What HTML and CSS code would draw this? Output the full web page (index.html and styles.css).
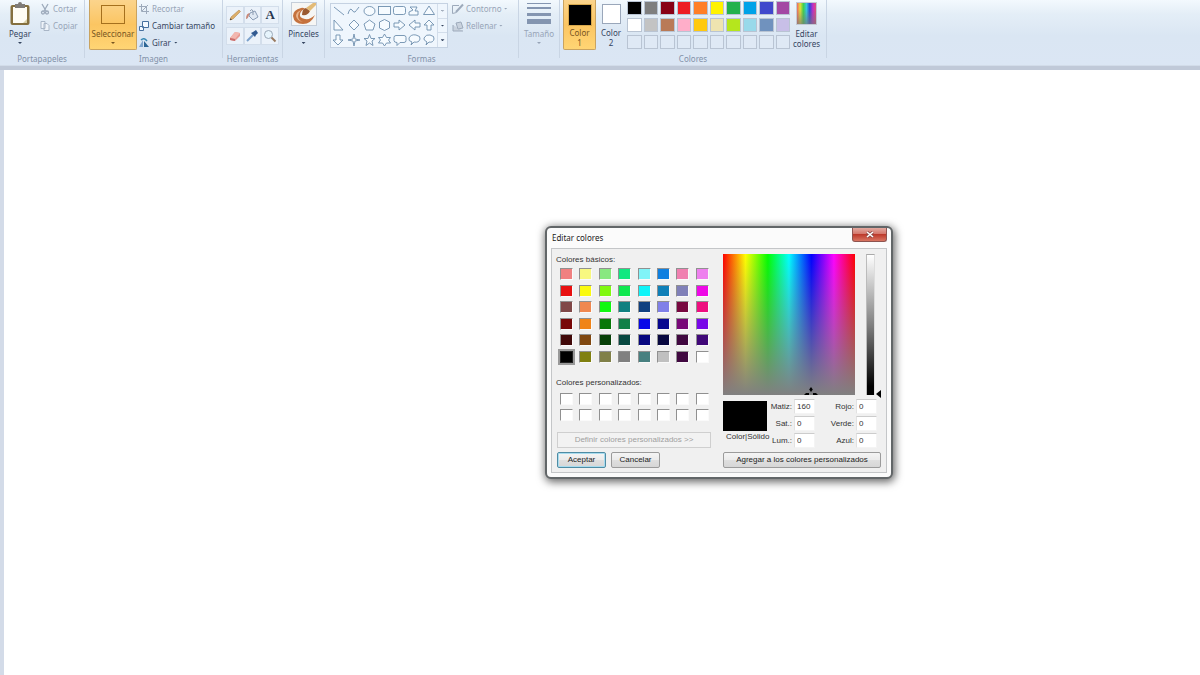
FILE: index.html
```html
<!DOCTYPE html>
<html lang="es">
<head>
<meta charset="utf-8">
<title>Editar colores</title>
<link rel="stylesheet" href="styles.css">
</head>
<body>
<header class="ribbon">
  <section class="group clipboard">
    <div class="group-body">
      <button class="big paste">
        <svg class="big-icon" width="22" height="24" viewBox="0 0 22 24"><rect x="1.500" y="3" width="19" height="20" rx="2" fill="#85703f"/><rect x="4" y="5" width="14" height="16" fill="#fffdf5"/><path d="M14 21h4v-4z" fill="#d8cfa8"/><path d="M6 2h3q0-2 2-2t2 2h3v4H6z" fill="#7f7c78"/></svg>
        <span>Pegar</span><i class="caret"></i>
      </button>
      <div class="list">
        <button class="row off"><svg width="10" height="12" viewBox="0 0 10 12" fill="none" stroke="#9daabb" stroke-width="1.300"><path d="M2 1l4 7M8 1L4 8"/><circle cx="3" cy="9.500" r="1.500"/><circle cx="7" cy="9.500" r="1.500"/></svg><span>Cortar</span></button>
        <button class="row off"><svg width="10" height="12" viewBox="0 0 10 12" fill="#eef3f9" stroke="#a9b6c7"><path d="M1 1.500h4v7H1zM4 3.500h3l2 2v5H4z"/></svg><span>Copiar</span></button>
      </div>
    </div>
    <h2 class="group-name">Portapapeles</h2>
  </section>

  <section class="group image">
    <div class="group-body">
      <button class="big select active">
        <svg class="big-icon" width="24" height="24" viewBox="0 0 24 24"><rect x="0.500" y="4.500" width="23" height="18" fill="none" stroke="#a5701d"/></svg>
        <span>Seleccionar</span><i class="caret"></i>
      </button>
      <div class="list">
        <button class="row off"><svg width="10" height="12" viewBox="0 0 10 12" fill="none" stroke="#9daabb"><path d="M2.500 1v7.500H10M0 3.500h7.500V11M3 8l6-6"/></svg><span>Recortar</span></button>
        <button class="row"><svg width="10" height="12" viewBox="0 0 10 12" fill="#f4f9ff" stroke="#47709f"><path d="M3.500 1.500h6v6h-6zM0.500 6.500h4v4h-4z"/></svg><span>Cambiar tamaño</span></button>
        <button class="row"><svg width="10" height="12" viewBox="0 0 10 12"><path d="M0 10h4V3z" fill="#7fa6cf"/><path d="M5 4v6h5z" fill="#2c6595"/><path d="M2 3q3-3 6 1" fill="none" stroke="#3587b3" stroke-width="1.500"/></svg><span>Girar</span><i class="caret"></i></button>
      </div>
    </div>
    <h2 class="group-name">Imagen</h2>
  </section>

  <section class="group tools">
    <div class="group-body">
      <div class="tool-grid">
        <button aria-label="Lápiz"><svg width="14" height="14" viewBox="0 0 14 14"><path d="M2 12l1-3 8-7 1.500 1.500L5 11z" fill="#dcae69" stroke="#b38a54" stroke-width=".6"/><path d="M2 12l.5-1.800L4 11.500z" fill="#333"/></svg></button>
        <button aria-label="Relleno"><svg width="14" height="14" viewBox="0 0 14 14"><path d="M5 5l5-2 3 6-5 3-4-4z" fill="#dfe8f3" stroke="#8a9db6"/><path d="M8 7V3q-1-3-3 0" fill="none" stroke="#8b9aaf"/><path d="M5 5Q1 5 1 11q2 0 3-4z" fill="#c98878"/></svg></button>
        <button class="letter" aria-label="Texto">A</button>
        <button aria-label="Borrador"><svg width="14" height="14" viewBox="0 0 14 14"><path d="M2 9l5-6 5 1v3l-5 5-5-1z" fill="#e89a93"/><path d="M2 9l5 1 5-6-5-1z" fill="#f2b7b0"/><path d="M2 9l5 1v2l-5-1z" fill="#c86d6d"/></svg></button>
        <button aria-label="Selector de color"><svg width="14" height="14" viewBox="0 0 14 14"><path d="M2 12l6-6" stroke="#7ba1cc" stroke-width="2"/><path d="M6 4l4 4 1-2 2-2-2-3-3 2z" fill="#315a91"/></svg></button>
        <button aria-label="Lupa"><svg width="14" height="14" viewBox="0 0 14 14"><circle cx="5.500" cy="5.500" r="4" fill="#e6f4fc" stroke="#9ba9b8"/><path d="M8.500 8.500l4 4" stroke="#997a5f" stroke-width="2"/></svg></button>
      </div>
    </div>
    <h2 class="group-name">Herramientas</h2>
  </section>

  <section class="group brushes">
    <div class="group-body">
      <button class="big">
        <svg class="big-icon" width="26" height="24" viewBox="0 0 26 24"><rect x=".5" y=".5" width="25" height="23" fill="#f6f6f4" stroke="#c5ced9"/><path d="M10 6Q2 8 2 14q1 8 10 8 8 0 12-9-5 5-10 4-6-1-5-5 1-4 5-5-2-2-4-1z" fill="#c5723d"/><path d="M10 8q-5 2-5 6 1 5 7 6-5-2-5-6 0-3 3-6z" fill="#e9b48c"/><path d="M11 13q0-6 4-7l4 3q-2 5-8 4z" fill="#9a5a31"/><path d="M15 6l7-5h3v2l-6 6z" fill="#e3bb77"/></svg>
        <span>Pinceles</span><i class="caret"></i>
      </button>
    </div>
  </section>

  <section class="group shapes">
    <div class="group-body">
      <div class="shape-box">
        <svg class="shape-grid" viewBox="0 0 106 44" width="106" height="44" fill="#f6fbff" stroke="#6e8fae" stroke-width=".9">
          <path d="M3 3l10 8"/><path d="M17 10q2-7 4-4t3 2 4-5" fill="none"/><ellipse cx="38.500" cy="7" rx="5.500" ry="4.500"/><rect x="47.500" y="2.500" width="12" height="8"/><rect x="62.500" y="2.500" width="12" height="8" rx="2"/><path d="M78 11V8l4-2-3-3h7l-2 4h3v4z"/><path d="M98 2l5.500 8.500h-11z"/>
          <path d="M3 16v10h9z"/><path d="M23 16l5 5-5 5-5-5z"/><path d="M38.500 16l5.500 4-2 6h-7l-2-6z"/><path d="M53.500 15.500l5 2.500v6l-5 2.500-5-2.500v-6z"/><path d="M63 19h5v-3l6 5-6 5v-3h-5z"/><path d="M89 19h-5v-3l-6 5 6 5v-3h5z"/><path d="M96 26v-5h-3l5-5 5 5h-3v5z"/>
          <path d="M5 31v5H2l5 5 5-5H9v-5z"/><path d="M23 30l1 5 5 1-5 1-1 5-1-5-5-1 5-1z"/><path d="M38.500 30.500l1.500 4h4l-3 2.500 1 4.500-3.500-2.500-3.500 2.500 1-4.500-3-2.500h4z"/><path d="M53.500 30l2 3.500h4L57.500 36l2 3h-4l-2 3-2-3h-4l2-3-2-2.500h4z"/><path d="M65 31.500h8q2 0 2 2v3q0 2-2 2h-4l-3 3v-3q-3 0-3-2v-3q0-2 2-2z"/><path d="M80 41l1-3q-4-1-3-4 2-4 7-3 5 1 4 4-1 4-6 3z"/><path d="M95 41l1-3q-4-2-3-4 2-4 6-3 5 1 4 4-1 4-5 3z"/>
        </svg>
        <div class="scroller">
          <button class="faded" aria-label="Subir"><i class="caret"></i></button>
          <button aria-label="Bajar"><i class="caret"></i></button>
          <button aria-label="Más formas"><i class="caret"></i></button>
        </div>
      </div>
      <div class="list">
        <button class="row off"><svg width="12" height="12" viewBox="0 0 12 12" fill="none" stroke="#9daabb"><path d="M7 2.500H.5v8l4-1"/><path d="M4 9l7-7.500" stroke-width="2"/></svg><span>Contorno</span><i class="caret"></i></button>
        <button class="row off"><svg width="12" height="12" viewBox="0 0 12 12" fill="#c9d2de" stroke="#9daabb"><path d="M4 3l5-1 2 6-5 1zM1 5v6h10"/></svg><span>Rellenar</span><i class="caret"></i></button>
      </div>
    </div>
    <h2 class="group-name">Formas</h2>
  </section>

  <section class="group size">
    <div class="group-body">
      <button class="big off">
        <svg class="big-icon" width="24" height="24" viewBox="0 0 24 24" fill="#8495b0"><rect y="1" width="24" height="1"/><rect y="5" width="24" height="2"/><rect y="11" width="24" height="3"/><rect y="17" width="24" height="5"/></svg>
        <span>Tamaño</span><i class="caret"></i>
      </button>
    </div>
  </section>

  <section class="group colors">
    <div class="group-body">
      <button class="big color-slot active"><b class="chip first"></b><span>Color<br>1</span></button>
      <button class="big color-slot second"><b class="chip"></b><span>Color<br>2</span></button>
      <div class="palette" id="palette"></div>
      <button class="big edit"><b class="rainbow"></b><span>Editar<br>colores</span></button>
    </div>
    <h2 class="group-name">Colores</h2>
  </section>
</header>

<main class="canvas"></main>

<div class="dialog" role="dialog" aria-labelledby="dialog-title">
  <div class="title-bar">
    <h1 id="dialog-title">Editar colores</h1>
    <button class="close" aria-label="Cerrar"><svg width="8" height="7" viewBox="0 0 8 7"><path d="M1 1l6 5M7 1L1 6" stroke="#8c4a45" stroke-width="3"/><path d="M1 1l6 5M7 1L1 6" stroke="#fff" stroke-width="1.600"/></svg></button>
  </div>
  <div class="panel">
    <div class="left">
      <p class="caption">Colores básicos:</p>
      <div class="wells basic" id="basic"></div>
      <p class="caption lower">Colores personalizados:</p>
      <div class="wells" id="custom"></div>
      <button class="btn define" disabled>Definir colores personalizados &gt;&gt;</button>
      <div class="actions">
        <button class="btn default">Aceptar</button>
        <button class="btn">Cancelar</button>
      </div>
    </div>
    <div class="right">
      <div class="pickers">
        <div class="spectrum"><svg class="cross" width="14" height="9" viewBox="0 0 14 9"><path d="M7 0l1.800 2.500L7 5 5.200 2.500zM0 8l2-2h3v2zM9 6h3l2 2H9z"/></svg></div>
        <div class="luminance"></div>
        <svg class="pointer" width="5" height="8" viewBox="0 0 5 8"><path d="M5 0v8L0 4z"/></svg>
      </div>
      <div class="values">
        <div class="solid"><div class="preview"></div><span>Color|Sólido</span></div>
        <div class="fields">
          <label for="hue">Matiz:</label><input id="hue" value="160">
          <label for="red">Rojo:</label><input id="red" value="0">
          <label for="sat">Sat.:</label><input id="sat" value="0">
          <label for="green">Verde:</label><input id="green" value="0">
          <label for="lum">Lum.:</label><input id="lum" value="0">
          <label for="blue">Azul:</label><input id="blue" value="0">
        </div>
      </div>
      <button class="btn add">Agregar a los colores personalizados</button>
    </div>
  </div>
</div>
<script src="script.js"></script>
</body>
</html>
```
FILE: styles.css
```css
* { box-sizing: border-box; }
body {
  margin: 0;
  min-height: 100vh;
  display: flex;
  flex-direction: column;
  background: #fff;
  font-family: "Noto Sans", "Open Sans", sans-serif;
  font-size: 8px;
  line-height: 10px;
  color: #34445f;
}
button, input { font: inherit; color: inherit; }
button { border: 0; padding: 0; background: none; }
h1, h2, p { margin: 0; font-size: 8px; font-weight: normal; }
svg { display: block; flex: none; }

/* Ribbon */
.ribbon {
  display: flex;
  height: 70px;
  background: linear-gradient(#f3f9fe 0, #e4eef7 14px, #dae6f3 36px, #dbe6f4 65px);
  border-bottom: 4px solid #c0c9d8;
  box-shadow: inset 0 -1px #d2dce9;
}
.group {
  display: flex;
  flex-direction: column;
  padding: 0 4px;
  border-right: 1px solid #c3cfdf;
  border-image: linear-gradient(#c9d5e4 0 57px, transparent 57px) 1;
  border-width: 0 1px 0 0;
}
.group-body { display: flex; height: 53px; }
.group-name { text-align: center; line-height: 12px; color: #8291a8; }
.clipboard { width: 85px; padding: 0; }
.image { width: 138px; }
.tools { width: 60px; padding: 0 3px; }
.brushes { width: 42px; }
.shapes { width: 194px; padding: 0 5px; }
.size { width: 41px; }
.colors { width: 267px; padding: 0 3px; }

.big {
  display: flex;
  flex-direction: column;
  align-items: center;
  height: 50px;
  padding-top: 2px;
}
.big > span { margin-top: 3px; white-space: nowrap; line-height: 9px; }
.big > .caret { margin: 4px 0 0; }
.paste { width: 40px; }
.select { width: 48px; }
.select .big-icon { margin-top: -1px; margin-bottom: 1px; }
.brushes .big, .size .big { flex: 1; }
.active {
  border: 1px solid #c9a360;
  border-top: 0;
  border-radius: 0 0 2px 2px;
  background: linear-gradient(#fbd48c, #fbc562 50%, #ffd574);
  color: #76551f;
}
.off { color: #97a4b7; }
.caret {
  flex: none;
  width: 4px;
  height: 2px;
  background: currentColor;
  clip-path: polygon(0 0, 100% 0, 50% 100%);
}
.list { display: flex; flex-direction: column; }
.row { display: flex; align-items: center; gap: 3px; height: 17px; white-space: nowrap; }
.image .list { padding-left: 2px; }
.shapes .list { padding-left: 4px; }
.shapes .row { gap: 2px; }

.tool-grid {
  flex: 1;
  display: grid;
  grid-template: 18px 18px / 1fr 1fr 1fr;
  row-gap: 3px;
  align-content: start;
  padding-top: 6px;
}
.tool-grid button {
  display: flex;
  align-items: center;
  justify-content: center;
  border: 1px solid #d3deeb;
  background: #ebf2fa;
}
.tool-grid .letter { font: bold 13px "Liberation Serif", serif; color: #26364f; }

.shape-box {
  display: flex;
  height: 45px;
  margin-top: 3px;
  border: 1px solid #c5d2e2;
  background: #eff6fd;
}
.scroller { display: flex; flex-direction: column; width: 10px; border-left: 1px solid #d3deeb; }
.scroller button { flex: 1; display: flex; align-items: center; justify-content: center; }
.scroller button + button { border-top: 1px solid #d3deeb; }
.faded { opacity: .4; }

.color-slot { width: 33px; padding-top: 4px; }
.color-slot.second { width: 30px; }
.color-slot > span { margin-top: 4px; line-height: 10px; }
.chip { width: 19px; height: 20px; border: 1px solid #9aa7ba; box-shadow: inset 0 0 0 1px #fff; background: #fff; }
.chip.first { width: 24px; height: 22px; margin-bottom: -2px; border-color: #d7a84d; background: #000; box-shadow: none; }
.palette {
  display: grid;
  grid-template-columns: repeat(10, 1fr);
  grid-auto-rows: 14px;
  align-content: start;
  gap: 3px 2px;
  width: 164px;
  padding: 1px 0 0 1px;
}
.palette button { border: 1px solid #b9c4d3; background: #dfe9f5; }
.edit { flex: 1; }
.edit > span { margin-top: 4px; line-height: 10px; }
.rainbow {
  width: 21px;
  height: 23px;
  border: 1px solid #c2c9d4;
  background:
    linear-gradient(transparent 30%, #777a),
    linear-gradient(90deg, #e66, #e5df39, #3ed04c, #34c6dc, #2b48d8, #c12ec8, #e04f7a);
}

/* Canvas */
.canvas { flex: 1; border-left: 4px solid #d3dbe8; background: #fff; }

/* Dialog */
.dialog {
  position: absolute;
  left: 545px;
  top: 226px;
  width: 348px;
  padding: 0 4px 4px;
  border: 2px solid #626668;
  border-radius: 6px;
  background: #fbfbfb;
  box-shadow: 1px 2px 8px 1px rgba(0, 0, 0, .6);
  color: #333;
}
.title-bar { display: flex; justify-content: space-between; height: 20px; }
.title-bar h1 { padding-left: 1px; line-height: 20px; color: #222; }
.close {
  display: flex;
  align-items: center;
  justify-content: center;
  width: 35px;
  height: 14px;
  border: 1px solid #8e5450;
  border-top: 0;
  border-radius: 0 0 3px 3px;
  background: linear-gradient(#e3aaa1, #d4776b 45%, #bd3a2b 50%, #d97562);
}
.panel {
  display: flex;
  gap: 12px;
  padding: 5px 5px 4px 4px;
  border: 1px solid #c4c6c8;
  background: #f0f0f0;
  font-family: "Liberation Sans", Arial, sans-serif;
}
.left { display: flex; flex-direction: column; width: 155px; }
.caption { line-height: 12px; }
.caption.lower { margin-top: 12px; margin-bottom: 2px; }
.wells {
  display: grid;
  grid-template-columns: repeat(8, 1fr);
  grid-auto-rows: 12px;
  row-gap: 4px;
  padding: 2px 0;
}
.basic { row-gap: 0; height: 99px; align-content: space-between; }
.wells button {
  width: 13px;
  margin-left: 4px;
  border: 1px solid;
  border-color: #909090 #fafafa #fafafa #909090;
  background: #fff;
}
.wells .chosen { outline: 2px solid #999; border-color: #222; }
.btn {
  height: 16px;
  border: 1px solid #9b9b9b;
  border-radius: 2px;
  background: linear-gradient(#f4f4f4, #ebebeb 50%, #dfdfdf 50%, #d6d6d6);
  white-space: nowrap;
  color: #222;
}
.define { margin: 9px 0 4px 1px; background: #f2f2f2; border-color: #cfcfcf; border-radius: 0; color: #a0a0a0; }
.actions { display: flex; gap: 5px; margin-left: 1px; }
.actions .btn { width: 49px; }
.btn.default { border-color: #4f8ca4; box-shadow: inset 0 0 0 1px #a8dcef; }

.right { flex: 1; display: flex; flex-direction: column; }
.pickers { display: flex; height: 141px; }
.spectrum {
  position: relative;
  width: 132px;
  background:
    linear-gradient(rgba(128, 128, 128, 0), #808080),
    linear-gradient(90deg, #f00, #ff0 17%, #0f0 34%, #0ff 50%, #00f 67%, #f0f 84%, #f00);
}
.cross { position: absolute; left: 81px; bottom: -1px; }
.luminance {
  width: 9px;
  margin-left: 11px;
  border: 1px solid;
  border-color: #aaa #ddd #ddd #bbb;
  border-bottom: 0;
  background: linear-gradient(#fff, #808080 50%, #000 94%);
}
.pointer { align-self: flex-end; margin: 0 0 -3px 1px; }
.values { display: flex; margin-top: 4px; }
.solid { width: 46px; padding-top: 2px; display: flex; flex-direction: column; }
.preview { width: 44px; height: 30px; background: #000; }
.solid span { padding: 1px 0 0 3px; white-space: nowrap; }
.fields {
  flex: 1;
  display: grid;
  grid-template: repeat(3, 15px) / 23px 21px 37px 21px;
  column-gap: 2px;
  row-gap: 2px;
  align-items: center;
}
.fields label { text-align: right; }
.fields input {
  width: 21px;
  height: 15px;
  padding: 0 0 0 2px;
  border: 1px solid;
  border-color: #ccc #f4f4f4 #f4f4f4 #e2e2e2;
  background: #fff;
}
.add { margin-top: auto; }
```
FILE: script.js
```js
const palette = [
  "#000", "#7f7f7f", "#880015", "#ed1c24", "#ff7f27", "#fff200", "#22b14c", "#00a2e8", "#3f48cc", "#a349a4",
  "#fff", "#c3c3c3", "#b97a57", "#ffaec9", "#ffc90e", "#efe4b0", "#b5e61d", "#99d9ea", "#7092be", "#c8bfe7",
  "", "", "", "", "", "", "", "", "", ""
];
const basic = [
  "#f08080", "#f8f880", "#88e880", "#10e880", "#80f4f8", "#1080e0", "#f080b0", "#ee80ee",
  "#e81010", "#fafa10", "#80f810", "#10e850", "#10f4f8", "#1080b8", "#8080b8", "#ee08e6",
  "#804848", "#f08850", "#10f810", "#108080", "#104080", "#8080e8", "#780840", "#ee1080",
  "#780808", "#f08418", "#087808", "#108048", "#0808e8", "#080890", "#780878", "#7808e8",
  "#400808", "#804810", "#084008", "#084840", "#080880", "#080840", "#400840", "#400878",
  "#000000", "#808010", "#808048", "#808080", "#488080", "#c0c0c0", "#400840", "#ffffff"
];

function fill(id, colors, chosen) {
  const box = document.getElementById(id);
  colors.forEach((color, i) => {
    const well = document.createElement("button");
    well.setAttribute("aria-label", color || "Vacío");
    if (color) well.style.background = color;
    if (i === chosen) well.className = "chosen";
    box.append(well);
  });
}

fill("palette", palette);
fill("basic", basic, 40);
fill("custom", Array(16).fill("#fff"));
```
